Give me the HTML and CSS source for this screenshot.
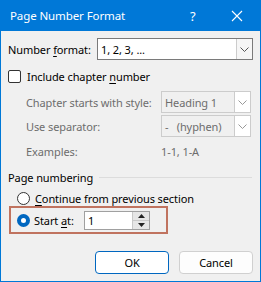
FILE: index.html
```html
<!DOCTYPE html>
<html lang="en">
<head>
  <meta charset="UTF-8">
  <title>Page Number Format</title>
  <link rel="stylesheet" href="styles.css">
</head>
<body>
  <div class="dialog">
    <div class="titlebar">
      <span class="title">Page Number Format</span>
      <span class="help">?</span>
      <span class="close">
        <svg width="12" height="12" viewBox="0 0 12 12"><path d="M1 1L11 11M11 1L1 11" stroke="#fff" stroke-width="1.1"/></svg>
      </span>
    </div>

    <div class="content">
      <div class="row row-format">
        <span class="label-format">Number <u>f</u>ormat:</span>
        <div class="combo combo-wide">
          <span class="combo-text">1, 2, 3, ...</span>
          <span class="combo-btn"><svg width="9" height="5" viewBox="0 0 9 5"><path d="M0.5 0.5L4.5 4.5L8.5 0.5" fill="none" stroke="#555"/></svg></span>
        </div>
      </div>

      <div class="row row-check">
        <span class="checkbox"></span>
        <span>Include chapter <u>n</u>umber</span>
      </div>

      <div class="row row-chapter disabled">
        <span class="sub-label">Chapter starts with style:</span>
        <div class="combo combo-small">
          <span class="combo-text">Heading 1</span>
          <span class="combo-btn"><svg width="9" height="5" viewBox="0 0 9 5"><path d="M0.5 0.5L4.5 4.5L8.5 0.5" fill="none" stroke="#999"/></svg></span>
        </div>
      </div>

      <div class="row row-sep disabled">
        <span class="sub-label">Use separator:</span>
        <div class="combo combo-small">
          <span class="combo-text">-&nbsp;&nbsp;&nbsp;(hyphen)</span>
          <span class="combo-btn"><svg width="9" height="5" viewBox="0 0 9 5"><path d="M0.5 0.5L4.5 4.5L8.5 0.5" fill="none" stroke="#999"/></svg></span>
        </div>
      </div>

      <div class="row row-examples disabled">
        <span class="sub-label">Examples:</span>
        <span>1-1, 1-A</span>
      </div>

      <div class="row row-group">
        <span>Page numbering</span>
        <span class="group-line"></span>
      </div>

      <div class="row row-continue">
        <span class="radio"></span>
        <span><u>C</u>ontinue from previous section</span>
      </div>

      <div class="row row-start">
        <span class="radio checked"></span>
        <span class="start-label">Start <u>a</u>t:</span>
        <div class="spin">
          <span class="spin-text">1</span>
          <span class="spin-btns">
            <span class="spin-up"><svg width="7" height="4" viewBox="0 0 7 4"><path d="M0 4L3.5 0L7 4Z" fill="#222"/></svg></span>
            <span class="spin-down"><svg width="7" height="4" viewBox="0 0 7 4"><path d="M0 0L3.5 4L7 0Z" fill="#222"/></svg></span>
          </span>
        </div>
      </div>

      <div class="row row-buttons">
        <button class="btn btn-default">OK</button>
        <button class="btn">Cancel</button>
      </div>
    </div>
  </div>
</body>
</html>
```

FILE: styles.css
```css
body {
  margin: 0;
  background: #fff;
  font-family: 'Noto Sans', 'Open Sans', Arial, sans-serif;
  font-size: 11px;
  letter-spacing: -0.1px;
  color: #000;
}
.dialog {
  width: 261px;
  height: 282px;
  box-sizing: border-box;
  border: 1px solid #0078d7;
  border-top: none;
  background: #f0f0f0;
  display: flex;
  flex-direction: column;
}
.titlebar {
  height: 31px;
  background: #0078d7;
  margin: 0 -1px;
  display: flex;
  align-items: center;
  color: #fff;
}
.title { margin-left: 10px; font-size: 11.5px; flex: 1; }
.help { width: 12px; margin-right: 29px; font-size: 13px; }
.close { width: 12px; height: 12px; margin-right: 18px; display: flex; }

.content {
  padding: 7px 7px 0 7px;
  display: flex;
  flex-direction: column;
}
.row { display: flex; align-items: center; white-space: nowrap; }
u { text-decoration-thickness: 1px; text-underline-offset: 2px; }

.row-format { height: 22px; }
.label-format { width: 89px; flex-shrink: 0; }
.combo {
  box-sizing: border-box;
  display: flex;
  align-items: center;
  border: 1px solid #7a7a7a;
  background: #fff;
  height: 22px;
}
.combo-wide { width: 156px; }
.combo-text { flex: 1; padding-left: 3px; white-space: nowrap; overflow: hidden; }
.combo-btn {
  width: 16px;
  height: 100%;
  box-sizing: border-box;
  border-left: 1px solid #ccc;
  background: #f6f6f6;
  display: flex;
  align-items: center;
  justify-content: center;
  flex-shrink: 0;
}

.row-check { height: 18px; margin-top: 7px; }
.checkbox {
  width: 11px; height: 11px;
  border: 1px solid #333;
  border-radius: 2px;
  background: #fff;
  margin-right: 6px;
  flex-shrink: 0;
}

.disabled { color: #6d6d6d; }
.sub-label { width: 135px; padding-left: 18px; flex-shrink: 0; }
.row-chapter { height: 22px; margin-top: 6px; }
.row-sep { height: 22px; margin-top: 2px; }
.combo-small { width: 90px; border-color: #ccc; background: #f0f0f0; }
.combo-small .combo-btn { background: #fff; border-left-color: #ccc; }
.row-examples { height: 18px; margin-top: 5px; }

.row-group { height: 18px; margin-top: 8px; }
.group-line { flex: 1; height: 1px; background: #dcdcdc; margin-left: 6px; margin-right: 1px; }

.radio {
  width: 11px; height: 11px;
  border: 1px solid #333;
  border-radius: 50%;
  background: #fff;
  margin-right: 5px;
  flex-shrink: 0;
}
.radio.checked {
  width: 5px; height: 5px;
  border: 4px solid #0067c0;
  background: #fff;
  margin-right: 4px;
}
.row-continue { height: 16px; margin-top: 4px; padding-left: 9px; }

.row-start {
  box-sizing: border-box;
  width: 159px;
  height: 28px;
  margin-left: 1px;
  border: 2px solid #c0735f;
  padding-left: 6px;
}
.start-label { width: 50px; flex-shrink: 0; }
.spin {
  box-sizing: border-box;
  width: 66px;
  height: 19px;
  border: 1px solid #a0a0a0;
  background: #fff;
  display: flex;
}
.spin-text { flex: 1; padding-left: 3px; line-height: 17px; }
.spin-btns {
  width: 16px;
  display: flex;
  flex-direction: column;
  border-left: 1px solid #c8c8c8;
}
.spin-up, .spin-down {
  flex: 1;
  background: #e6e6e6;
  display: flex;
  align-items: center;
  justify-content: center;
}
.spin-up { border-bottom: 1px solid #c8c8c8; }

.row-buttons { justify-content: flex-end; gap: 10px; margin-top: 17px; }
.btn {
  width: 74px;
  height: 23px;
  font-family: inherit;
  font-size: 11px;
  letter-spacing: inherit;
  background: #fdfdfd;
  border: 1px solid #d0d0d0;
  border-radius: 4px;
  color: #000;
  padding: 0;
}
.btn-default { border-color: #0067c0; background: #fff; }
```
